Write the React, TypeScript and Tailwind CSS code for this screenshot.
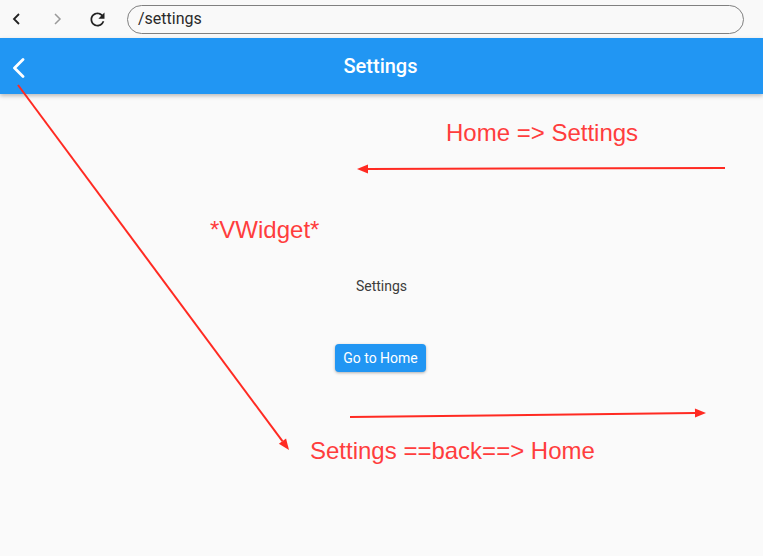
import React from 'react';

// Red annotation arrow: a line with a filled head at (x2, y2)
const Arrow = ({ x1, y1, x2, y2 }: { x1: number; y1: number; x2: number; y2: number }) => {
  const a = Math.atan2(y2 - y1, x2 - x1);
  const len = 11;
  const half = 4.5;
  const bx = x2 - len * Math.cos(a);
  const by = y2 - len * Math.sin(a);
  const px = -Math.sin(a) * half;
  const py = Math.cos(a) * half;
  return (
    <g>
      <line x1={x1} y1={y1} x2={bx} y2={by} stroke="#ff2a22" strokeWidth={2} />
      <polygon points={`${x2},${y2} ${bx + px},${by + py} ${bx - px},${by - py}`} fill="#ff2a22" />
    </g>
  );
};

const App: React.FC = () => {
  return (
    <div className="relative w-[763px] h-[556px] overflow-hidden bg-[#fafafa] flex flex-col font-['Roboto',sans-serif]">
      {/* Browser toolbar */}
      <div className="h-[38px] flex items-center bg-[#f9f9f9] shrink-0 pl-[12px]">
        <svg width="10" height="12" viewBox="0 0 10 12" fill="none">
          <polyline points="7,1 2,6 7,11" stroke="#222" strokeWidth="1.8" />
        </svg>
        <svg className="ml-[30px]" width="10" height="12" viewBox="0 0 10 12" fill="none">
          <polyline points="3,1 8,6 3,11" stroke="#9a9a9a" strokeWidth="1.5" />
        </svg>
        <svg className="ml-[25px]" width="21" height="21" viewBox="0 0 24 24" fill="#222">
          <path d="M17.65 6.35C16.2 4.9 14.21 4 12 4c-4.42 0-7.99 3.58-7.99 8s3.57 8 7.99 8c3.73 0 6.84-2.55 7.73-6h-2.08c-.82 2.33-3.04 4-5.65 4-3.31 0-6-2.69-6-6s2.69-6 6-6c1.66 0 3.14.69 4.22 1.78L13 11h7V4l-2.35 2.35z" />
        </svg>
        <div className="ml-[19px] w-[617px] h-[29px] rounded-full border border-[#808080] flex items-center pl-[10px] text-[16px] text-[#2a2a2a]">
          /settings
        </div>
      </div>

      {/* App bar */}
      <div className="relative h-[56px] shrink-0 bg-[#2196f3] flex items-center justify-center shadow-[0_2px_4px_rgba(0,0,0,0.25)] z-10">
        <div className="absolute left-[12px] top-[20px]">
          <svg width="14" height="20" viewBox="0 0 14 20" fill="none">
            <polyline points="11,1.5 2.5,10 11,18.5" stroke="#fff" strokeWidth="2.8" strokeLinecap="round" strokeLinejoin="round" />
          </svg>
        </div>
        <span className="text-white text-[20px] font-medium leading-none -ml-[2px]">Settings</span>
      </div>

      {/* Body */}
      <div className="flex-1 flex flex-col items-center justify-center">
        <div className="text-[14px] leading-4 text-[#3c3c3c]">Settings</div>
        <button className="mt-[50px] h-[28px] px-[8px] rounded-[4px] bg-[#2196f3] text-white text-[14px] shadow-[0_1px_3px_rgba(0,0,0,0.3)] -ml-[2px]">
          Go to Home
        </button>
      </div>

      {/* Annotations */}
      <svg className="absolute inset-0 pointer-events-none z-20" width="763" height="556">
        <Arrow x1={725} y1={168} x2={357} y2={169} />
        <Arrow x1={18} y1={85} x2={289} y2={450} />
        <Arrow x1={350} y1={417} x2={706} y2={413} />
      </svg>
      <div className="absolute left-[446px] top-[121px] z-20 text-[24px] leading-6 text-[#ff3d3d] font-['Liberation_Sans',Arial,sans-serif] whitespace-nowrap">
        Home =&gt; Settings
      </div>
      <div className="absolute left-[210px] top-[218px] z-20 text-[24px] leading-6 text-[#ff3d3d] font-['Liberation_Sans',Arial,sans-serif] whitespace-nowrap">
        *VWidget*
      </div>
      <div className="absolute left-[310px] top-[439px] z-20 text-[24px] leading-6 text-[#ff3d3d] font-['Liberation_Sans',Arial,sans-serif] whitespace-nowrap">
        Settings ==back==&gt; Home
      </div>
    </div>
  );
};

export default App;
